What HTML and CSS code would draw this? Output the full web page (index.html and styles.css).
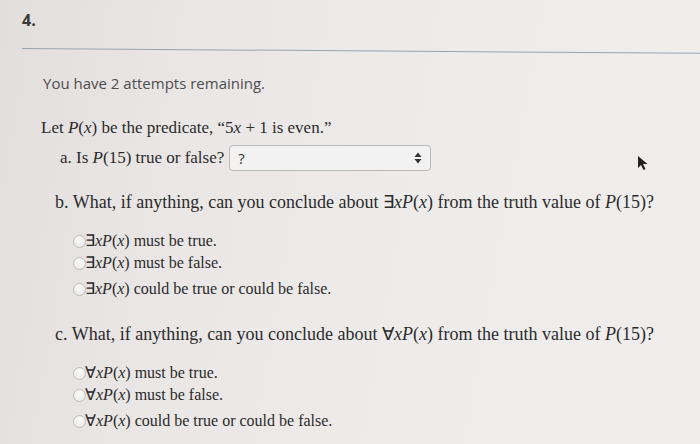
FILE: index.html
```html
<!DOCTYPE html>
<html>
<head>
<meta charset="utf-8">
<link rel="stylesheet" href="styles.css">
</head>
<body>
<div class="page">
  <div class="qnum">4.</div>
  <div class="rule"></div>
  <div class="attempts">You have 2 attempts remaining.</div>
  <div class="question">
    <div class="intro">Let <i>P</i>(<i>x</i>) be the predicate, “5<i>x</i> + 1 is even.”</div>
    <div class="parta">
      <span>a. Is <i>P</i>(15) true or false?</span>
      <div class="select"><span>?</span>
        <svg class="arrows" width="8" height="12" viewBox="0 0 8 12"><path d="M4 0.5 L7.5 5 L0.5 5 Z M4 11.5 L7.5 7 L0.5 7 Z" fill="#333"/></svg>
      </div>
    </div>
    <div class="sub">b. What, if anything, can you conclude about ∃<i>xP</i>(<i>x</i>) from the truth value of <i>P</i>(15)?</div>
    <div class="options">
      <label class="opt"><span class="radio"></span><span class="txt">∃<i>xP</i>(<i>x</i>) must be true.</span></label>
      <label class="opt"><span class="radio"></span><span class="txt">∃<i>xP</i>(<i>x</i>) must be false.</span></label>
      <label class="opt"><span class="radio"></span><span class="txt">∃<i>xP</i>(<i>x</i>) could be true or could be false.</span></label>
    </div>
    <div class="sub subc">c. What, if anything, can you conclude about ∀<i>xP</i>(<i>x</i>) from the truth value of <i>P</i>(15)?</div>
    <div class="options">
      <label class="opt"><span class="radio"></span><span class="txt">∀<i>xP</i>(<i>x</i>) must be true.</span></label>
      <label class="opt"><span class="radio"></span><span class="txt">∀<i>xP</i>(<i>x</i>) must be false.</span></label>
      <label class="opt"><span class="radio"></span><span class="txt">∀<i>xP</i>(<i>x</i>) could be true or could be false.</span></label>
    </div>
  </div>
  <svg class="cursor" width="12" height="16" viewBox="0 0 12 16"><path d="M1 1 L1 13 L4 10 L6.5 15 L8.5 14 L6 9 L10.5 9 Z" fill="#222"/></svg>
</div>
</body>
</html>
```
FILE: styles.css
```css
html, body {
  margin: 0;
  padding: 0;
}
body {
  width: 700px;
  height: 444px;
  overflow: hidden;
  background: linear-gradient(100deg, #e2dedd 0%, #e9e6e5 25%, #eeeceb 60%, #efeeed 100%);
}
.page {
  position: relative;
  height: 444px;
}
.qnum {
  font-family: "Open Sans", sans-serif;
  font-weight: 700;
  font-size: 16px;
  color: #3a3a3a;
  padding: 9px 0 0 22px;
  height: 38px;
  line-height: 22px;
  box-sizing: border-box;
}
.rule {
  margin-left: 22px;
  margin-top: 10px;
  border-top: 1px solid #98a4ae;
  transform-origin: left center;
  transform: rotate(0.4deg);
}
.attempts {
  font-family: "Open Sans", sans-serif;
  font-size: 15px;
  color: #4d4d4d;
  padding: 24px 0 0 43px;
  line-height: 20px;
}
.question {
  font-family: "Liberation Serif", serif;
  color: #2b2b2b;
  padding-left: 41px;
  margin-top: 24px;
}
.intro {
  font-size: 17px;
  line-height: 22px;
}
.parta {
  display: flex;
  align-items: center;
  gap: 5px;
  padding-left: 19px;
  font-size: 17px;
  margin-top: 6px;
}
.select {
  width: 202px;
  height: 26px;
  box-sizing: border-box;
  border: 1px solid #b9b9b9;
  border-radius: 4px;
  background: #f3f2f2;
  display: flex;
  align-items: center;
  justify-content: space-between;
  padding: 0 8px 0 8px;
  font-family: "Open Sans", sans-serif;
  font-size: 15px;
  color: #333;
}
.sub {
  font-size: 18px;
  line-height: 22px;
  padding-left: 14px;
  margin-top: 20px;
}
.subc {
  margin-top: 23px;
}
.options {
  padding-left: 32px;
  margin-top: 17px;
  display: flex;
  flex-direction: column;
}
.opt {
  display: flex;
  align-items: center;
  font-size: 16px;
  line-height: 22px;
}
.opt:last-child {
  margin-top: 4px;
}
.radio {
  width: 13px;
  height: 13px;
  border: 1px solid #bdbbbb;
  border-radius: 50%;
  background: radial-gradient(circle at 50% 35%, #fafafa, #e9e8e8);
  box-sizing: border-box;
  margin-right: -1px;
}
.txt {
  position: relative;
}
.cursor {
  position: absolute;
  left: 637px;
  top: 155px;
}
```
